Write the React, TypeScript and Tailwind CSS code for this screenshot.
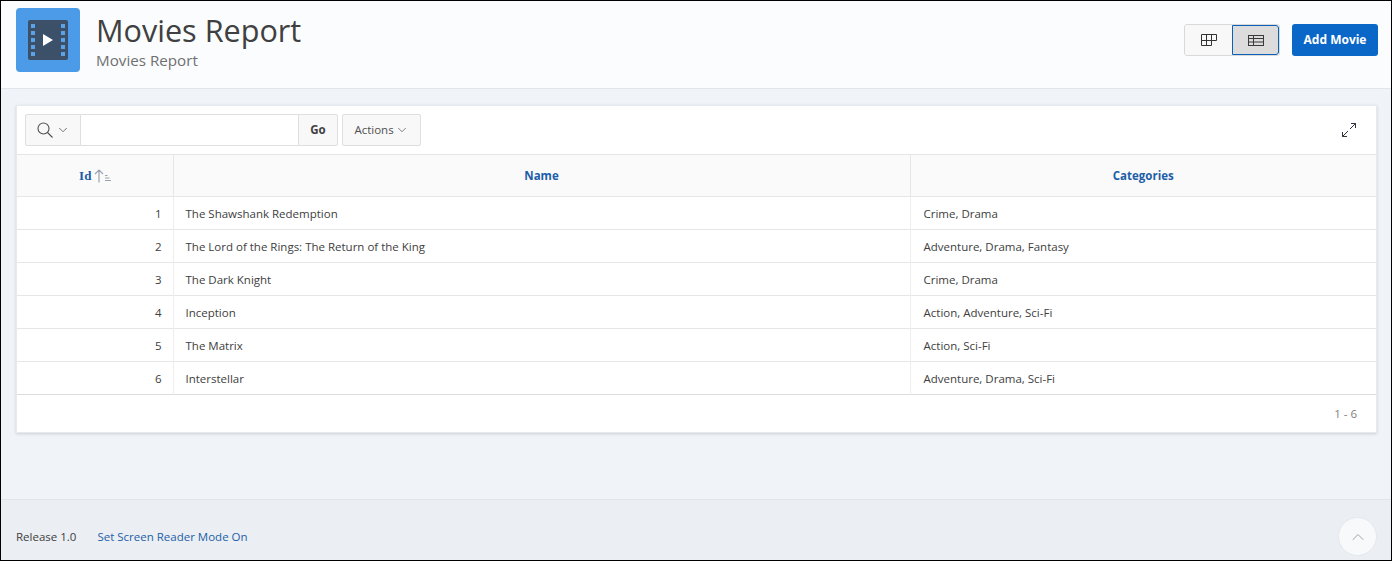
import { ChevronDown, ChevronUp } from "lucide-react";

const movies = [
  { id: 1, name: "The Shawshank Redemption", categories: "Crime, Drama" },
  { id: 2, name: "The Lord of the Rings: The Return of the King", categories: "Adventure, Drama, Fantasy" },
  { id: 3, name: "The Dark Knight", categories: "Crime, Drama" },
  { id: 4, name: "Inception", categories: "Action, Adventure, Sci-Fi" },
  { id: 5, name: "The Matrix", categories: "Action, Sci-Fi" },
  { id: 6, name: "Interstellar", categories: "Adventure, Drama, Sci-Fi" },
];

function FilmIcon() {
  return (
    <svg width="40" height="40" viewBox="0 0 40 40">
      <rect width="40" height="40" rx="2" fill="#3c5069" />
      {[4, 11, 18, 25, 32].map((y) => (
        <g key={y} fill="#5ba3e8">
          <rect x="3" y={y} width="4" height="4" />
          <rect x="33" y={y} width="4" height="4" />
        </g>
      ))}
      <path d="M15 14 L25 20 L15 26 Z" fill="#fff" />
    </svg>
  );
}

function GridIcon() {
  return (
    <svg width="16" height="12" viewBox="0 0 16 12" fill="none" stroke="#333" strokeWidth="1">
      <path d="M.5.5h15v6h-5v5h-10zM.5 6.500h10M5.500.5v11M10.500.5v6" />
    </svg>
  );
}

function ReportIcon() {
  return (
    <svg width="16" height="11" viewBox="0 0 16 11" fill="none" stroke="#3a3a3a" strokeWidth="1">
      <rect x=".5" y=".5" width="15" height="10" />
      <path d="M.5 3.500h15M.5 7h15M5.500.5v10" />
    </svg>
  );
}

function ExpandIcon() {
  return (
    <svg width="16" height="16" viewBox="0 0 16 16" fill="none" stroke="#33333f" strokeWidth="1">
      <path d="M10 1.500h4.500V6M14.500 1.500L9 7M1.500 10v4.500H6M1.500 14.500L7 9" />
    </svg>
  );
}

function SortIcon() {
  return (
    <svg width="18" height="14" viewBox="0 0 18 14" fill="none" stroke="#9aa3ad" strokeWidth="1.200">
      <path d="M5 13.500V1M1 5l4-4 4 4M11 6.500h2.500M11 9h4.500M11 11.500h6" />
    </svg>
  );
}

function SearchIcon() {
  return (
    <svg width="16" height="16" viewBox="0 0 16 16" fill="none" stroke="#505050" strokeWidth="1.100">
      <circle cx="6.500" cy="6.500" r="5.500" />
      <path d="M10.500 10.500L15.500 15.500" />
    </svg>
  );
}

export default function App() {
  return (
    <div className="flex h-[561px] flex-col border border-black bg-[#f0f3f8] font-['Open_Sans','Noto_Sans',sans-serif] text-[11.500px] text-[#404040]">
      <header className="flex h-[88px] shrink-0 items-start justify-between border-b border-[#e2e6ec] bg-[#fbfcfe] pl-[15px] pr-[13px] pt-[7px]">
        <div className="flex">
          <div className="flex h-16 w-16 items-center justify-center rounded-[4px] bg-[#4c9be8]">
            <FilmIcon />
          </div>
          <div className="ml-4">
            <h1 className="text-[30.600px] leading-[44px] text-[#404040]">Movies Report</h1>
            <p className="mt-[-2px] text-[15.200px] leading-[20px] text-[#707070]">Movies Report</p>
          </div>
        </div>
        <div className="mt-4 flex">
          <div className="flex h-8 w-24 overflow-hidden rounded-[3px] border border-[#d9d9d9]">
            <button className="flex w-[47px] items-center justify-center bg-[#f8f8f8]">
              <GridIcon />
            </button>
            <button className="flex flex-1 items-center justify-center rounded-r-[3px] border border-[#0a62b8] bg-[#dcdcdc]">
              <ReportIcon />
            </button>
          </div>
          <button className="ml-3 h-8 w-[86px] rounded-[3px] bg-[#0a67c7] text-[12px] font-bold text-white">
            Add Movie
          </button>
        </div>
      </header>

      <main className="flex-1 pl-[15px] pr-[14px] pt-4">
        <div className="border border-[#e6e9ee] bg-white shadow-[0_1px_3px_rgba(0,0,0,0.15)]">
          <div className="flex h-[48px] items-center justify-between pl-2 pr-[19px]">
            <div className="flex">
              <div className="flex h-8 w-[56px] items-center justify-center gap-[3px] rounded-l-[2px] border border-[#dfdfdf] bg-[#f8f8f8]">
                <SearchIcon />
                <ChevronDown size={14} strokeWidth={1.200} className="text-[#404040]" />
              </div>
              <input className="h-8 w-[217px] border-y border-[#dfdfdf] bg-white" aria-label="Search" />
              <button className="h-8 w-[40px] rounded-r-[2px] border border-[#dfdfdf] bg-[#f8f8f8] font-bold">Go</button>
              <button className="ml-1 flex h-8 w-[79px] items-center justify-center gap-[1px] rounded-[2px] border border-[#dfdfdf] bg-[#f8f8f8] text-[#505050]">
                Actions
                <ChevronDown size={14} strokeWidth={1.200} />
              </button>
            </div>
            <ExpandIcon />
          </div>

          <table className="w-full table-fixed border-collapse">
            <colgroup>
              <col className="w-[156px]" />
              <col className="w-[737px]" />
              <col />
            </colgroup>
            <thead>
              <tr className="h-[42px] border-y border-[#e6e6e6] bg-[#fafafa] font-bold text-[#1d5ea8]">
                <th className="border-r border-[#e6e6e6] font-bold">
                  <span className="inline-flex items-center gap-[3px] pl-[2px] font-['Liberation_Serif','Open_Sans',serif] text-[13px]">
                    Id
                    <SortIcon />
                  </span>
                </th>
                <th className="border-r border-[#e6e6e6] font-bold">Name</th>
                <th className="font-bold">Categories</th>
              </tr>
            </thead>
            <tbody>
              {movies.map((movie) => (
                <tr key={movie.id} className="h-[33px] border-b border-[#e6e6e6] last:border-[#dcdcdc]">
                  <td className="border-r border-[#eeeeee] pr-[11px] pt-[2px] text-right">{movie.id}</td>
                  <td className="border-r border-[#eeeeee] pl-3 pt-[2px]">{movie.name}</td>
                  <td className="pl-[13px] pt-[2px]">{movie.categories}</td>
                </tr>
              ))}
            </tbody>
          </table>

          <div className="flex h-[37px] items-center justify-end pr-[19px] text-[#808080]">1 - 6</div>
        </div>
      </main>

      <footer className="flex h-[61px] shrink-0 items-center border-t border-[#e2e5ea] bg-[#ebeef3] pl-[15px] pr-[14px] pt-[13px]">
        <span>Release 1.0</span>
        <a className="ml-[21px] text-[#1d5ea8]" href="#">Set Screen Reader Mode On</a>
        <button className="ml-auto flex h-[39px] w-[39px] items-center justify-center rounded-full border border-[#e4e7ec] bg-[#f8f9fb] text-[#9a9a9a]">
          <ChevronUp size={20} strokeWidth={1.100} />
        </button>
      </footer>
    </div>
  );
}
